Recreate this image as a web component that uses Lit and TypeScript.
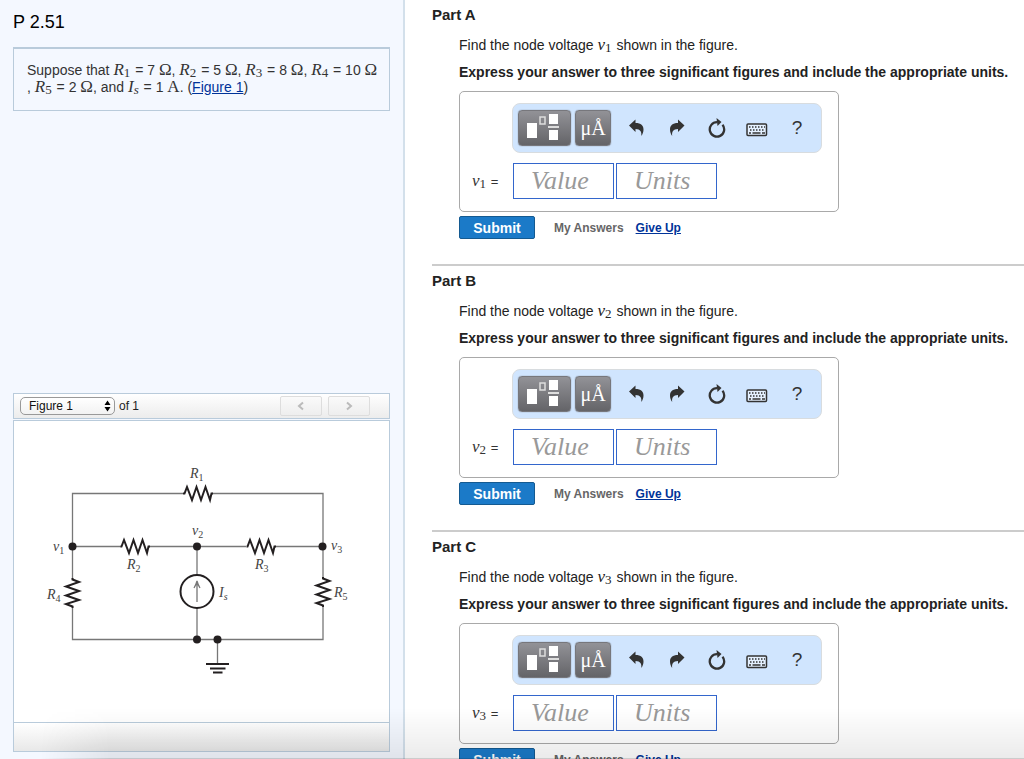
import { LitElement, html, svg, css } from "lit";
import { customElement, property } from "lit/decorators.js";

const term = (letter: string, sub: string) =>
  html`<span class="math"><i>${letter}</i><sub>${sub === "s" ? html`<i>s</i>` : sub}</sub></span>`;

const mathStyles = css`
  .math {
    padding-right: 1px;
    font-family: "Liberation Serif", serif;
    font-size: 17px;
    line-height: 0;
    white-space: nowrap;
  }
  .math sub {
    font-size: 13px;
    line-height: 0;
    vertical-align: -2px;
  }
`;

@customElement("circuit-figure")
class CircuitFigure extends LitElement {
  static styles = css`
    :host {
      display: block;
    }
    svg {
      display: block;
      width: 100%;
      height: auto;
    }
    .wire {
      fill: none;
      stroke: #777;
      stroke-width: 1.3;
    }
    .part {
      fill: none;
      stroke: #231f20;
      stroke-width: 2;
      stroke-linejoin: miter;
    }
    .dot {
      fill: #231f20;
    }
    text {
      font: italic 14px "Liberation Serif", serif;
      fill: #444;
    }
    .sub {
      font-size: 10px;
    }
    .num {
      font-style: normal;
    }
  `;

  private label(x: number, y: number, name: string, sub: string) {
    const kind = sub === "s" ? "sub" : "sub num";
    return svg`<text x=${x} y=${y}>${name}<tspan class=${kind} dy="3">${sub}</tspan></text>`;
  }

  render() {
    return html`
      <svg viewBox="14 421 375 301" role="img" aria-label="Circuit diagram">
        <path class="wire" d="M72.500 546V493.500H183M212 493.500H323V546M72.500 546.500H121M149 546.500H246M275 546.500H323M72.500 546V579M72.500 606V639.500H323V606M323 546V578M197 546V575M197 608V639M217.500 639V664" />
        <path class="part" d="M183 493.500h1.500L187 487l5 13 4.500-13 4.500 13 4.500-13 4.500 13 1.500-6.500h1.500" />
        <path class="part" d="M120.500 546.500h1L124 540l5 13 4.500-13 4.500 13 4.500-13 4.500 13 1.500-6.500h1.500" />
        <path class="part" d="M246.500 546.500h1L250 540l5 13 4.500-13 4.500 13 4.500-13 4.500 13 1.500-6.500h1.500" />
        <path class="part" d="M72.500 578v1.500L79 582l-13 4.500 13 4.500-13 4.500 13 4.500-13 4 6.500 2.500v1.500" />
        <path class="part" d="M323 577v1.500L329.500 581l-13 4.500 13 4.500-13 4.500 13 4.500-13 4 6.500 2.500v1.500" />
        <circle class="part" cx="197" cy="591.500" r="16.500" />
        <path class="wire" d="M197 602V581M194 588q2-3 3-7q1 4 3 7" />
        <circle class="dot" cx="72.500" cy="546.500" r="4" />
        <circle class="dot" cx="197" cy="546.500" r="4" />
        <circle class="dot" cx="322.500" cy="546.500" r="4" />
        <circle class="dot" cx="197" cy="639.500" r="4" />
        <circle class="dot" cx="217.500" cy="639.500" r="4" />
        <path class="part" d="M206 664H229M210 668.500H225.500M213 672.500H222.500" />
        ${this.label(190, 478, "R", "1")}
        ${this.label(192, 535, "v", "2")}
        ${this.label(53, 551, "v", "1")}
        ${this.label(127, 569, "R", "2")}
        ${this.label(255, 569, "R", "3")}
        ${this.label(331, 550, "v", "3")}
        ${this.label(47, 599, "R", "4")}
        ${this.label(334, 597, "R", "5")}
        ${this.label(219, 597, "I", "s")}
      </svg>
    `;
  }
}

@customElement("answer-part")
class AnswerPart extends LitElement {
  @property() letter = "A";
  @property() index = "1";

  static styles = [
    mathStyles,
    css`
      :host {
        display: block;
        padding-top: 5px;
        padding-bottom: 25px;
      }
      h2,
      p {
        margin: 0;
        line-height: 20px;
      }
      h2 {
        font-size: 15px;
      }
      .content {
        padding: 10px 0 0 27px;
      }
      .strong {
        margin-top: 7px;
        font-weight: bold;
      }
      .box {
        box-sizing: border-box;
        max-width: 380px;
        height: 121px;
        margin-top: 9px;
        padding: 11px 16px 11px 12px;
        border: 1px solid #a9a9a9;
        border-radius: 5px;
        display: grid;
        grid-template-columns: 40px 1fr;
        grid-template-rows: 50px 36px;
        row-gap: 10px;
        align-items: center;
      }
      .toolbar {
        grid-column: 2;
        box-sizing: border-box;
        height: 50px;
        padding: 0 4px 0 5px;
        display: flex;
        align-items: center;
        background: #d0e5fe;
        border: 1px solid #d8dcdf;
        border-radius: 8px;
      }
      button {
        padding: 0;
        font: inherit;
        cursor: pointer;
      }
      .dark {
        width: 36px;
        height: 36px;
        border: 1px solid #77777c;
        border-radius: 4px;
        background: linear-gradient(#929297, #646468);
        color: #fff;
        box-shadow: 0 0 1px #555;
        font: 20px "Liberation Serif", serif;
      }
      .wide {
        width: 53px;
        margin-right: 4px;
      }
      .tools {
        flex: 1;
        display: grid;
        grid-template-columns: repeat(5, 1fr);
        padding-left: 6px;
      }
      .tool {
        height: 36px;
        border: 0;
        background: none;
        color: #333;
        font-size: 19px;
      }
      svg {
        display: block;
        margin: auto;
      }
      label {
        color: #333;
        font-size: 13px;
      }
      .fields {
        display: flex;
        gap: 2px;
        padding-left: 1px;
      }
      input {
        box-sizing: border-box;
        width: 101px;
        height: 36px;
        padding: 0 0 0 17px;
        border: 1px solid #3366cc;
        border-radius: 0;
        background: #fff;
        font: italic 26px "Liberation Serif", serif;
      }
      input::placeholder {
        color: #999;
        opacity: 1;
      }
      .actions {
        display: flex;
        align-items: center;
        margin-top: 4px;
        height: 23px;
        font-weight: bold;
        font-size: 12px;
        color: #666;
      }
      .submit {
        width: 76px;
        height: 23px;
        margin-right: 19px;
        border: 1px solid #145a91;
        border-radius: 2px;
        background: #1b7ac8;
        color: #fff;
        font-size: 14px;
      }
      a {
        color: #003399;
        margin-left: 12px;
      }
    `,
  ];

  render() {
    const id = `value-${this.index}`;
    return html`
      <h2>Part ${this.letter}</h2>
      <div class="content">
        <p>Find the node voltage ${term("v", this.index)} shown in the figure.</p>
        <p class="strong">Express your answer to three significant figures and include the appropriate units.</p>
        <div class="box">
          <div class="toolbar">
            <button class="dark wide" aria-label="Templates">
              <svg width="35" height="28" viewBox="0 0 35 28">
                <path fill="#fff" d="M0 9h10v15H0zM22 0h9v10h-9zM22 16h9v10h-9z" />
                <path fill="#ddd" d="M21 12h11v2H21z" />
                <path fill="none" stroke="#ddd" stroke-width="1.500" d="M13 3h5v7h-5z" />
              </svg>
            </button>
            <button class="dark" aria-label="Symbols">μÅ</button>
            <div class="tools">
              <button class="tool" aria-label="Undo">
                <svg width="16" height="18" viewBox="0 0 16 18">
                  <path fill="#333" d="M0 6.500 6.500.5V4c5.500 0 8 2.500 8 6.500 0 2.500-.7 4.300-2.200 6.500.5-4-.8-7-5.800-7v3z" />
                </svg>
              </button>
              <button class="tool" aria-label="Redo">
                <svg width="16" height="18" viewBox="0 0 16 18">
                  <path fill="#333" d="M15.500 6.500 9 .5V4c-5.500 0-8 2.500-8 6.500 0 2.500.7 4.300 2.200 6.500C2.700 13 4 10 9 10v3z" />
                </svg>
              </button>
              <button class="tool" aria-label="Reset">
                <svg width="18" height="20" viewBox="0 0 18 20">
                  <path fill="none" stroke="#333" stroke-width="2.300" d="M9 4.200A7.200 7.200 0 1 0 14.500 6.800" />
                  <path fill="#333" d="M8.500 0 13.500 4 9.500 8z" />
                </svg>
              </button>
              <button class="tool" aria-label="Keyboard">
                <svg width="22" height="20" viewBox="0 0 22 20">
                  <rect x="1" y="6" width="19.500" height="11.500" rx="1" fill="#e4f0ff" stroke="#333" stroke-width="1.500" />
                  <path fill="none" stroke="#333" stroke-width="1.500" stroke-dasharray="1.500 1.500" d="M3 9H19M4 12H19" />
                  <path fill="none" stroke="#333" stroke-width="1.500" d="M3 15h2M6.500 15h8M16 15h3" />
                </svg>
              </button>
              <button class="tool" aria-label="Help">?</button>
            </div>
          </div>
          <label for=${id}>${term("v", this.index)} =</label>
          <div class="fields">
            <input id=${id} placeholder="Value" />
            <input aria-label="Units" placeholder="Units" />
          </div>
        </div>
        <div class="actions">
          <button class="submit">Submit</button>
          <span>My Answers</span>
          <a href="#give-up">Give Up</a>
        </div>
      </div>
    `;
  }
}

@customElement("app-root")
class AppRoot extends LitElement {
  static styles = [
    mathStyles,
    css`
      :host {
        display: grid;
        grid-template-columns: 405fr 619fr;
        height: 100vh;
        overflow: hidden;
        background: #fff;
        color: #222;
        font: 14px "Liberation Sans", Arial, sans-serif;
      }
      aside {
        box-sizing: border-box;
        min-width: 0;
        min-height: 0;
        display: flex;
        flex-direction: column;
        padding: 12px 13px 7px;
        background: #f4f8ff;
        border-right: 2px solid #d3e0eb;
      }
      h1 {
        margin: 0;
        font-size: 18px;
        font-weight: normal;
        line-height: 20px;
        color: #000;
      }
      .problem {
        margin: 15px 0 0;
        padding: 13px 10px 14px 13px;
        border: 1px solid #b9cbdb;
        border-top-width: 2px;
        line-height: 17px;
        color: #333;
      }
      .keep {
        white-space: nowrap;
      }
      .ohm {
        font-family: "Liberation Serif", serif;
        font-size: 17px;
        line-height: 0;
      }
      a {
        color: #003399;
      }
      .viewer {
        margin-top: auto;
      }
      .bar {
        box-sizing: border-box;
        height: 26px;
        display: flex;
        align-items: center;
        gap: 6px;
        padding: 0 19px 0 6px;
        border: 1px solid #b9cbdb;
        background: linear-gradient(#fff, #ececec);
      }
      .picker {
        position: relative;
        display: flex;
        margin-right: -2px;
      }
      select {
        appearance: none;
        box-sizing: border-box;
        width: 95px;
        height: 18px;
        padding: 0 8px;
        border: 1px solid #999;
        border-radius: 5px;
        background: linear-gradient(#fff, #f2f2f2);
        font: 12px "Liberation Sans", Arial, sans-serif;
        color: #111;
      }
      .arrows {
        position: absolute;
        right: 4px;
        top: 3px;
        pointer-events: none;
      }
      .count {
        flex: 1;
        font-size: 12px;
      }
      .nav {
        width: 42px;
        height: 20px;
        padding: 0;
        border: 1px solid #ddd;
        border-radius: 2px;
        background: linear-gradient(#fafafa, #eee);
      }
      .nav svg {
        display: block;
        margin: auto;
      }
      .canvas {
        margin-top: 1px;
        border: 1px solid #b9cbdb;
        background: #fff;
      }
      .foot {
        height: 28px;
        border: 1px solid #b9cbdb;
        border-top: 0;
        background: linear-gradient(#fff, #e8e8e8);
      }
      main {
        min-width: 0;
        min-height: 0;
        padding-left: 27px;
        overflow: hidden;
      }
      .divided {
        border-top: 2px solid #ccc;
      }
      .edge {
        position: fixed;
        left: 0;
        right: 0;
        bottom: 0;
        height: 50px;
        pointer-events: none;
        background: linear-gradient(transparent, rgba(0, 0, 0, 0.08));
        border-bottom: 1px solid rgba(0, 0, 0, 0.2);
        mask-image: linear-gradient(to right, transparent 40px, #000 110px);
      }
    `,
  ];

  render() {
    const ohm = html`<span class="ohm">Ω</span>`;
    return html`
      <aside>
        <h1>P 2.51</h1>
        <p class="problem">
          <span class="keep">Suppose that ${term("R", "1")} = 7 ${ohm}, ${term("R", "2")} = 5 ${ohm}, ${term("R", "3")} = 8 ${ohm}, ${term("R", "4")} = 10 ${ohm}</span>
          <span class="keep">, ${term("R", "5")} = 2 ${ohm}, and ${term("I", "s")} = 1 <span class="ohm">A</span>. (<a href="#figure-1">Figure 1</a>)</span>
        </p>
        <div class="viewer">
          <div class="bar">
            <div class="picker">
              <select aria-label="Figure">
                <option>Figure 1</option>
              </select>
              <svg class="arrows" width="7" height="12" viewBox="0 0 7 12">
                <path d="M.5 5 3.500.5 6.500 5zM.5 7h6l-3 4.500z" />
              </svg>
            </div>
            <span class="count">of 1</span>
            <button class="nav" aria-label="Previous figure">
              <svg width="8" height="10" viewBox="0 0 8 10"><path d="M6 1.500 2 5l4 3.500" fill="none" stroke="#bbb" stroke-width="2" /></svg>
            </button>
            <button class="nav" aria-label="Next figure">
              <svg width="8" height="10" viewBox="0 0 8 10"><path d="M2 1.500 6 5 2 8.500" fill="none" stroke="#bbb" stroke-width="2" /></svg>
            </button>
          </div>
          <div class="canvas"><circuit-figure id="figure-1"></circuit-figure></div>
          <div class="foot"></div>
        </div>
      </aside>
      <main>
        <answer-part letter="A" index="1"></answer-part>
        <answer-part class="divided" letter="B" index="2"></answer-part>
        <answer-part class="divided" letter="C" index="3"></answer-part>
      </main>
      <div class="edge"></div>
    `;
  }
}
